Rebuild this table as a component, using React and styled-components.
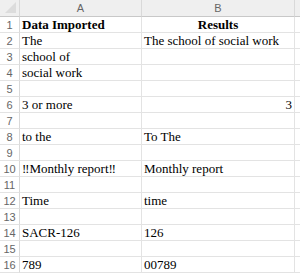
import React from "react";
import styled, { createGlobalStyle } from "styled-components";

const GlobalStyle = createGlobalStyle`
  body {
    margin: 0;
    background: #ffffff;
  }
`;

const Sheet = styled.div`
  display: grid;
  grid-template-columns: 20px 122px 153px 5px;
  grid-auto-rows: 16px;
  grid-template-rows: 17px;
  width: 300px;
  height: 276px;
  overflow: hidden;
  background: #ffffff;
  font-family: "Liberation Serif", serif;
`;

const Corner = styled.div`
  background: #efefef;
  border-right: 1px solid #d9d9d9;
  border-bottom: 1px solid #c8c8c8;
  position: relative;
  &::after {
    content: "";
    position: absolute;
    right: 3px;
    bottom: 3px;
    border-style: solid;
    border-width: 0 0 11px 11px;
    border-color: transparent transparent #dcdcdc transparent;
  }
`;

const ColHead = styled.div`
  background: #efefef;
  border-right: 1px solid #d9d9d9;
  border-bottom: 1px solid #c8c8c8;
  color: #666666;
  font-family: "Liberation Sans", Arial, sans-serif;
  font-size: 11px;
  display: flex;
  align-items: center;
  justify-content: center;
`;

const RowHead = styled.div`
  border-right: 1px solid #d9d9d9;
  border-bottom: 1px solid #e3e3e3;
  color: #666666;
  font-family: "Liberation Sans", Arial, sans-serif;
  font-size: 11px;
  display: flex;
  align-items: center;
  justify-content: center;
`;

const Cell = styled.div`
  border-right: 1px solid #e3e3e3;
  border-bottom: 1px solid #e3e3e3;
  font-family: "Liberation Serif", serif;
  font-size: 13px;
  color: #000000;
  display: flex;
  align-items: flex-end;
  padding: 0 2px;
  white-space: nowrap;
  font-weight: ${(p) => (p.$bold ? 700 : 400)};
  justify-content: ${(p) =>
    p.$align === "center" ? "center" : p.$align === "right" ? "flex-end" : "flex-start"};
  line-height: 15px;
`;

const Filler = styled.div`
  border-bottom: 1px solid ${(p) => (p.$head ? "#c8c8c8" : "#e3e3e3")};
  background: ${(p) => (p.$head ? "#efefef" : "#ffffff")};
`;

const rows = [
  [{ t: "Data Imported", bold: true }, { t: "Results", bold: true, align: "center" }],
  [{ t: "The" }, { t: "The school of social work" }],
  [{ t: "school of" }, { t: "" }],
  [{ t: "social work" }, { t: "" }],
  [{ t: "" }, { t: "" }],
  [{ t: "3 or more" }, { t: "3", align: "right" }],
  [{ t: "" }, { t: "" }],
  [{ t: "to the" }, { t: "To The" }],
  [{ t: "" }, { t: "" }],
  [{ t: "‼Monthly report‼" }, { t: "Monthly report" }],
  [{ t: "" }, { t: "" }],
  [{ t: "Time" }, { t: "time" }],
  [{ t: "" }, { t: "" }],
  [{ t: "SACR-126" }, { t: "126" }],
  [{ t: "" }, { t: "" }],
  [{ t: "789" }, { t: "00789" }],
];

export default function App() {
  return (
    <>
      <GlobalStyle />
      <Sheet>
        <Corner />
        <ColHead>A</ColHead>
        <ColHead>B</ColHead>
        <Filler $head />
        {rows.map((r, i) => (
          <React.Fragment key={i}>
            <RowHead>{i + 1}</RowHead>
            {r.map((c, j) => (
              <Cell key={j} $bold={c.bold} $align={c.align}>
                {c.t}
              </Cell>
            ))}
            <Filler />
          </React.Fragment>
        ))}
      </Sheet>
    </>
  );
}
